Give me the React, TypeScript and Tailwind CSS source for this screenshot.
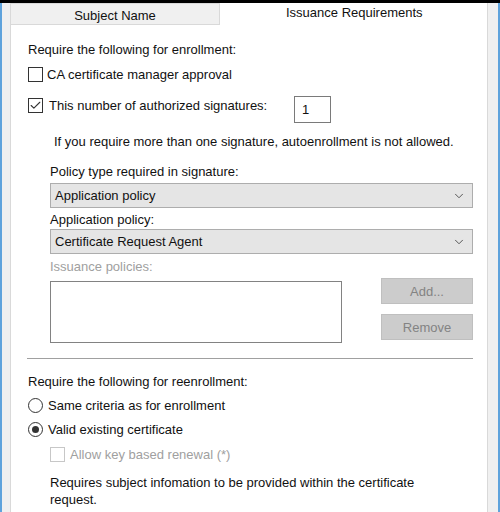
import { Check, ChevronDown } from 'lucide-react';

const font = { fontFamily: '"Liberation Sans", Arial, sans-serif' };

function CheckBox({ checked, disabled }: { checked?: boolean; disabled?: boolean }) {
  return (
    <div
      className={`w-[15px] h-[15px] shrink-0 border flex items-center justify-center bg-white ${
        disabled ? 'border-[#c7c7c7]' : 'border-[#333333]'
      }`}
    >
      {checked && <Check size={13} strokeWidth={2} className="text-[#333333]" />}
    </div>
  );
}

function Radio({ checked }: { checked?: boolean }) {
  return (
    <div className="w-[15px] h-[15px] shrink-0 rounded-full border border-[#333333] bg-white flex items-center justify-center">
      {checked && <div className="w-[7px] h-[7px] rounded-full bg-[#333333]" />}
    </div>
  );
}

function Select({ value }: { value: string }) {
  return (
    <div className="w-[423px] h-[25px] bg-[#e5e5e5] border border-[#adadad] flex items-center justify-between pl-[4px] pr-[6px]">
      <span>{value}</span>
      <ChevronDown size={14} strokeWidth={1.5} className="text-[#444]" />
    </div>
  );
}

export default function App() {
  return (
    <div
      className="w-[500px] h-[512px] overflow-hidden bg-[#f0f0f0] flex flex-col text-[13px] leading-[17px] text-[#111]"
      style={font}
    >
      <div className="h-[3px] bg-black shrink-0" />
      <div className="flex flex-1 border-l-[2px] border-r-[2px] border-[#5fa3dc] pl-[8px] pr-[10px]">
        <div className="flex flex-col flex-1">
          {/* tabs */}
          <div className="flex h-[22px] shrink-0">
            <div className="w-[210px] bg-[#f0f0f0] border border-[#d9d9d9] flex items-center justify-center pt-[2px]">
              Subject Name
            </div>
            <div className="flex-1 bg-white border-r border-[#d9d9d9] flex items-start pl-[66px] pt-[1px]">
              Issuance Requirements
            </div>
          </div>
          {/* panel */}
          <div className="flex-1 bg-white border-l border-r border-[#d9d9d9] pl-[17px] pr-[12px] pt-[16px]">
            <div>Require the following for enrollment:</div>
            <div className="mt-[8px] flex items-center gap-[4px]">
              <CheckBox />
              <span>CA certificate manager approval</span>
            </div>
            <div className="mt-[13px] flex items-start">
              <div className="w-[266px] flex items-center gap-[6px] pt-[1px]">
                <CheckBox checked />
                <span>This number of authorized signatures:</span>
              </div>
              <div className="w-[37px] h-[27px] border border-[#7a7a7a] flex items-center pl-[7px]">1</div>
            </div>
            <div className="mt-[10px] pl-[26px]">
              If you require more than one signature, autoenrollment is not allowed.
            </div>
            <div className="pl-[22px]">
              <div className="mt-[13px]">Policy type required in signature:</div>
              <div className="mt-[3px]">
                <Select value="Application policy" />
              </div>
              <div className="mt-[3px]">Application policy:</div>
              <div className="mt-[1px]">
                <Select value="Certificate Request Agent" />
              </div>
              <div className="mt-[4px] text-[#a0a0a0]">Issuance policies:</div>
              <div className="mt-[3px] flex">
                <div className="mt-[3px] w-[292px] h-[62px] border border-[#828282] bg-white" />
                <div className="ml-[39px] flex flex-col gap-[10px]">
                  <div className="w-[92px] h-[26px] bg-[#cccccc] border border-[#bfbfbf] text-[#838383] flex items-center justify-center">
                    Add...
                  </div>
                  <div className="w-[92px] h-[26px] bg-[#cccccc] border border-[#bfbfbf] text-[#838383] flex items-center justify-center">
                    Remove
                  </div>
                </div>
              </div>
            </div>
            <div className="mt-[15px] h-px w-[446px] -ml-[1px] bg-[#a0a0a0]" />
            <div className="mt-[14px]">Require the following for reenrollment:</div>
            <div className="mt-[7px] flex items-center gap-[5px]">
              <Radio />
              <span>Same criteria as for enrollment</span>
            </div>
            <div className="mt-[7px] flex items-center gap-[5px]">
              <Radio checked />
              <span>Valid existing certificate</span>
            </div>
            <div className="mt-[8px] pl-[22px] flex items-center gap-[5px] text-[#a0a0a0]">
              <CheckBox disabled />
              <span>Allow key based renewal (*)</span>
            </div>
            <div className="mt-[11px] pl-[22px] w-[422px]">
              Requires subject infomation to be provided within the certificate request.
            </div>
          </div>
        </div>
      </div>
    </div>
  );
}
